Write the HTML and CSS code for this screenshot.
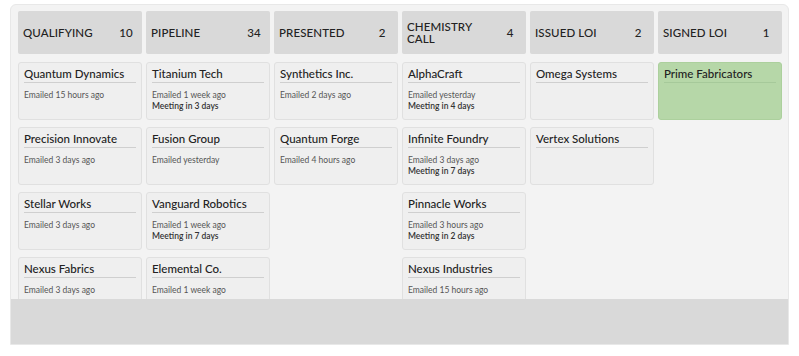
FILE: index.html
```html
<!DOCTYPE html>
<html lang="en">
<head>
    <meta charset="UTF-8">
    <meta name="viewport" content="width=device-width, initial-scale=1.0">
    <title>Deal Pipeline</title>
    <link rel="stylesheet" href="styles.css">
</head>
<body>
    <div class="board">
        <div class="columns">
            <div class="column">
                <div class="column-head"><span class="stage">Qualifying</span><span class="count">10</span></div>
                <div class="card">
                    <div class="card-title">Quantum Dynamics</div>
                    <div class="note">Emailed 15 hours ago</div>
                </div>
                <div class="card">
                    <div class="card-title">Precision Innovate</div>
                    <div class="note">Emailed 3 days ago</div>
                </div>
                <div class="card">
                    <div class="card-title">Stellar Works</div>
                    <div class="note">Emailed 3 days ago</div>
                </div>
                <div class="card">
                    <div class="card-title">Nexus Fabrics</div>
                    <div class="note">Emailed 3 days ago</div>
                </div>
            </div>

            <div class="column">
                <div class="column-head"><span class="stage">Pipeline</span><span class="count">34</span></div>
                <div class="card">
                    <div class="card-title">Titanium Tech</div>
                    <div class="note">Emailed 1 week ago</div>
                    <div class="meeting">Meeting in 3 days</div>
                </div>
                <div class="card">
                    <div class="card-title">Fusion Group</div>
                    <div class="note">Emailed yesterday</div>
                </div>
                <div class="card">
                    <div class="card-title">Vanguard Robotics</div>
                    <div class="note">Emailed 1 week ago</div>
                    <div class="meeting">Meeting in 7 days</div>
                </div>
                <div class="card">
                    <div class="card-title">Elemental Co.</div>
                    <div class="note">Emailed 1 week ago</div>
                </div>
            </div>

            <div class="column">
                <div class="column-head"><span class="stage">Presented</span><span class="count">2</span></div>
                <div class="card">
                    <div class="card-title">Synthetics Inc.</div>
                    <div class="note">Emailed 2 days ago</div>
                </div>
                <div class="card">
                    <div class="card-title">Quantum Forge</div>
                    <div class="note">Emailed 4 hours ago</div>
                </div>
            </div>

            <div class="column">
                <div class="column-head"><span class="stage">Chemistry Call</span><span class="count">4</span></div>
                <div class="card">
                    <div class="card-title">AlphaCraft</div>
                    <div class="note">Emailed yesterday</div>
                    <div class="meeting">Meeting in 4 days</div>
                </div>
                <div class="card">
                    <div class="card-title">Infinite Foundry</div>
                    <div class="note">Emailed 3 days ago</div>
                    <div class="meeting">Meeting in 7 days</div>
                </div>
                <div class="card">
                    <div class="card-title">Pinnacle Works</div>
                    <div class="note">Emailed 3 hours ago</div>
                    <div class="meeting">Meeting in 2 days</div>
                </div>
                <div class="card">
                    <div class="card-title">Nexus Industries</div>
                    <div class="note">Emailed 15 hours ago</div>
                </div>
            </div>

            <div class="column">
                <div class="column-head"><span class="stage">Issued LOI</span><span class="count">2</span></div>
                <div class="card">
                    <div class="card-title">Omega Systems</div>
                </div>
                <div class="card">
                    <div class="card-title">Vertex Solutions</div>
                </div>
            </div>

            <div class="column">
                <div class="column-head"><span class="stage">Signed LOI</span><span class="count">1</span></div>
                <div class="card signed">
                    <div class="card-title">Prime Fabricators</div>
                </div>
            </div>
        </div>
        <div class="board-footer"></div>
    </div>
</body>
</html>
```

FILE: styles.css
```css
body {
    margin: 0;
    padding: 4px 10px;
    font-family: Lato, "Noto Sans", sans-serif;
    color: #222;
    background-color: white;
}
.board {
    height: 341px;
    display: flex;
    flex-direction: column;
    background-color: #f3f3f3;
    border: 1px solid #e8e8e8;
    border-radius: 6px 6px 0 0;
    box-sizing: border-box;
    overflow: hidden;
}
.columns {
    flex: 1;
    display: flex;
    gap: 4px;
    padding: 6px 6px 0 7px;
    overflow: hidden;
}
.column {
    width: 124px;
    flex-shrink: 0;
    display: flex;
    flex-direction: column;
    gap: 7px;
}
.column-head {
    height: 43px;
    margin-bottom: 1px;
    display: flex;
    align-items: center;
    justify-content: space-between;
    padding: 0 4px 0 5px;
    background-color: #d9d9d9;
    border-radius: 2px;
    flex-shrink: 0;
}
.stage {
    font-size: 11.5px;
    line-height: 12px;
    font-weight: 500;
    letter-spacing: 0.1px;
    text-transform: uppercase;
    width: 80px;
    padding-top: 1px;
}
.count {
    width: 24px;
    text-align: center;
    font-size: 11.5px;
    font-weight: 500;
}
.card {
    height: 58px;
    flex-shrink: 0;
    box-sizing: border-box;
    padding: 4px 5px;
    background-color: #efefef;
    border: 1px solid #e0e0e0;
    border-radius: 3px;
}
.card.signed {
    background-color: #b6d7a8;
    border-color: #acd09d;
}
.card-title {
    font-size: 11.5px;
    line-height: 13px;
    font-weight: 500;
    padding-bottom: 2px;
    border-bottom: 1px solid #cfcfcf;
    margin-bottom: 7px;
}
.card.signed .card-title {
    border-bottom-color: #a6c99a;
}
.note {
    font-size: 8.5px;
    line-height: 11px;
    color: #555;
}
.meeting {
    font-size: 8.5px;
    line-height: 11px;
    font-weight: 600;
    color: #333;
}
.board-footer {
    height: 45px;
    flex-shrink: 0;
    background-color: #d9d9d9;
}
```
